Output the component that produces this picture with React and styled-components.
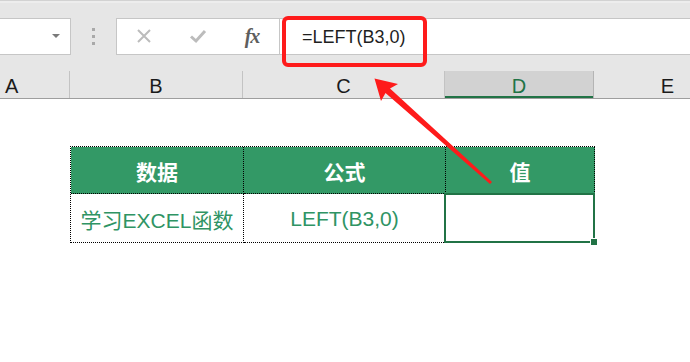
import React from "react";
import styled, { createGlobalStyle } from "styled-components";

const GlobalStyle = createGlobalStyle`
  html, body { margin: 0; padding: 0; background: #ffffff; }
  body { font-family: "Liberation Sans", "Noto Sans CJK SC", sans-serif; }
`;

const Page = styled.div`
  position: relative;
  width: 690px;
  height: 362px;
  overflow: hidden;
  background: #ffffff;
`;

const FormulaBar = styled.div`
  height: 70px;
  box-sizing: border-box;
  background: #e6e6e6;
  border-top: 2px solid #ededed;
  display: flex;
  align-items: flex-start;
  padding-top: 16px;
`;

const TopLine = styled.div`
  height: 1px;
  background: #d2d2d2;
`;

const BarInner = styled.div`
  display: flex;
  align-items: center;
  height: 36px;
  width: 100%;
  margin-top: -1px;
`;

const NameBox = styled.div`
  box-sizing: border-box;
  width: 71px;
  height: 37px;
  background: #ffffff;
  border: 1px solid #c6c6c6;
  border-left: none;
  display: flex;
  align-items: center;
  justify-content: flex-end;
  padding-right: 10px;
`;

const Caret = styled.span`
  width: 0;
  height: 0;
  border-left: 4px solid transparent;
  border-right: 4px solid transparent;
  border-top: 4px solid #7a7a7a;
`;

const Grip = styled.div`
  width: 45px;
  display: flex;
  flex-direction: column;
  align-items: center;
  gap: 4px;
`;

const GripDot = styled.span`
  width: 3px;
  height: 3px;
  background: #a9a9a9;
`;

const ButtonBox = styled.div`
  box-sizing: border-box;
  width: 164px;
  height: 37px;
  background: #ffffff;
  border: 1px solid #c6c6c6;
  display: flex;
  align-items: center;
  justify-content: space-between;
  padding: 0 17px 0 17px;
`;

const IconSlot = styled.span`
  width: 20px;
  display: flex;
  align-items: center;
  justify-content: center;
`;

const Fx = styled.span`
  font-family: "Liberation Serif", "DejaVu Serif", serif;
  font-style: italic;
  font-weight: bold;
  font-size: 20px;
  color: #5e5e5e;
  letter-spacing: -1px;
  line-height: 1;
`;

const FormulaInput = styled.div`
  flex: 1;
  box-sizing: border-box;
  height: 37px;
  background: #ffffff;
  border-top: 1px solid #c6c6c6;
  border-bottom: 1px solid #c6c6c6;
  display: flex;
  align-items: center;
  padding-left: 22px;
  font-size: 18px;
  color: #1f1f1f;
  padding-top: 2px;
`;

const ColumnHeaders = styled.div`
  display: flex;
  height: 28px;
  box-sizing: border-box;
  background: #e6e6e6;
  border-bottom: 1px solid #9e9e9e;
`;

const ColHeader = styled.div`
  flex: 0 0 ${(p) => p.$w}px;
  box-sizing: border-box;
  display: flex;
  align-items: center;
  justify-content: ${(p) => (p.$left ? "flex-start" : "center")};
  padding-left: ${(p) => (p.$left ? "5px" : "0")};
  padding-top: 3px;
  font-size: 20px;
  color: ${(p) => (p.$active ? "#217346" : "#1a1a1a")};
  background: ${(p) => (p.$active ? "#d2d2d2" : "transparent")};
  border-right: 1px solid ${(p) => (p.$active ? "#b4b4b4" : "#c3c3c3")};
  box-shadow: ${(p) => (p.$active ? "inset 0 -2px 0 #217346" : "none")};
`;

const Sheet = styled.div`
  padding: 47px 0 0 70px;
`;

const Table = styled.div`
  display: grid;
  grid-template-columns: 173px 202px 149px;
  grid-template-rows: 47px 49px;
  width: max-content;
  border-top: 1px dotted #000;
  border-left: 1px dotted #000;
`;

const Cell = styled.div`
  position: relative;
  box-sizing: border-box;
  display: flex;
  align-items: center;
  justify-content: center;
  font-family: "Liberation Sans", "Noto Sans CJK SC", sans-serif;
  font-size: ${(p) => (p.$head ? "21px" : "21px")};
  padding-top: 1px;
  white-space: nowrap;
  border-right: 1px dotted ${(p) => (p.$selected ? "transparent" : "#000")};
  border-bottom: 1px dotted ${(p) => (p.$selected ? "transparent" : "#000")};
  background: ${(p) => (p.$head ? "#339966" : "#ffffff")};
  color: ${(p) => (p.$head ? "#ffffff" : "#2f9464")};
  font-weight: ${(p) => (p.$head ? 700 : 400)};
  ${(p) =>
    p.$selected &&
    `
    &::after {
      content: "";
      position: absolute;
      left: -2px;
      top: -1px;
      right: -1px;
      bottom: -1px;
      border: 2px solid #217346;
    }
    &::before {
      content: "";
      position: absolute;
      right: -4px;
      bottom: -4px;
      width: 6px;
      height: 6px;
      background: #217346;
      border: 1px solid #ffffff;
      z-index: 2;
    }
  `}
`;

const Overlay = styled.svg`
  position: absolute;
  left: 0;
  top: 0;
  pointer-events: none;
`;

const Highlight = styled.div`
  position: absolute;
  left: 282px;
  top: 16px;
  width: 145px;
  height: 51px;
  box-sizing: border-box;
  border: 4px solid #fe1b1b;
  border-radius: 6px;
  pointer-events: none;
`;

const columns = [
  { key: "A", w: 70, left: true },
  { key: "B", w: 173 },
  { key: "C", w: 202 },
  { key: "D", w: 149, active: true },
  { key: "E", w: 148 },
];

export default function App() {
  return (
    <>
      <GlobalStyle />
      <Page>
        <TopLine />
        <FormulaBar>
          <BarInner>
            <NameBox>
              <Caret />
            </NameBox>
            <Grip>
              <GripDot />
              <GripDot />
              <GripDot />
            </Grip>
            <ButtonBox>
              <IconSlot>
                <svg width="16" height="16" viewBox="0 0 16 16">
                  <path d="M2 2 L14 14 M14 2 L2 14" stroke="#bcbcbc" strokeWidth="2" fill="none" />
                </svg>
              </IconSlot>
              <IconSlot>
                <svg width="18" height="16" viewBox="0 0 18 16">
                  <path d="M2 8.5 L7 13 L16 3" stroke="#bcbcbc" strokeWidth="3" fill="none" />
                </svg>
              </IconSlot>
              <IconSlot>
                <Fx>fx</Fx>
              </IconSlot>
            </ButtonBox>
            <FormulaInput>=LEFT(B3,0)</FormulaInput>
          </BarInner>
        </FormulaBar>
        <ColumnHeaders>
          {columns.map((c) => (
            <ColHeader key={c.key} $w={c.w} $left={c.left} $active={c.active}>
              {c.key}
            </ColHeader>
          ))}
        </ColumnHeaders>
        <Sheet>
          <Table>
            <Cell $head>数据</Cell>
            <Cell $head>公式</Cell>
            <Cell $head>值</Cell>
            <Cell>学习EXCEL函数</Cell>
            <Cell>LEFT(B3,0)</Cell>
            <Cell $selected />
          </Table>
        </Sheet>
        <Highlight />
        <Overlay width="690" height="362" viewBox="0 0 690 362">
          <polygon
            points="374.5,78.5 398,84 390,88.5 492,182 490,184 385.5,93 381,101"
            fill="#fe1b1b"
          />
        </Overlay>
      </Page>
    </>
  );
}
